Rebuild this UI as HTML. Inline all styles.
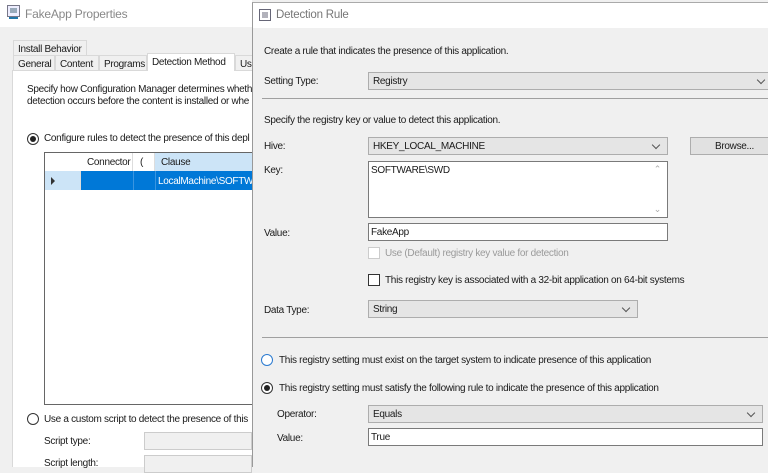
<!DOCTYPE html>
<html><head><meta charset="utf-8"><style>
*{box-sizing:border-box;margin:0;padding:0}
body{width:768px;height:467px;overflow:hidden;background:#f0f0f0;font-family:"Liberation Sans",sans-serif;font-size:10px;letter-spacing:-0.3px;color:#1a1a1a;position:relative}
.a{position:absolute;white-space:nowrap}
.combo{position:absolute;background:#e5e5e5;border:1px solid #adadad;padding:3px 0 0 4px}
.combo::after{content:"";position:absolute;right:8px;top:4px;width:5px;height:5px;border-right:1px solid #555;border-bottom:1px solid #555;transform:rotate(45deg)}
.inp{position:absolute;background:#fff;border:1px solid #7a7a7a;padding:3px 0 0 2px}
.rad{position:absolute;width:12px;height:12px;border:1px solid #333;border-radius:50%;background:#fff}
.rad.on::after{content:"";position:absolute;left:2px;top:2px;width:6px;height:6px;border-radius:50%;background:#222}
.chk{position:absolute;width:12px;height:12px;border:1px solid #333;background:#fff}
.tab{position:absolute;border:1px solid #d9d9d9;border-bottom:none;background:#f0f0f0;padding:3px 0 0 4px;height:16px}
</style></head><body>
<div class="a" style="left:0;top:0;width:252px;height:27px;background:#fff"></div>
<svg class="a" style="left:7px;top:5px" width="13" height="14"><rect x="0.5" y="0.5" width="12" height="11" fill="#eef" stroke="#778"/><rect x="3" y="3" width="7" height="5" fill="#9ab"/><rect x="2" y="12" width="9" height="2" fill="#27a"/></svg>
<div class="a" style="left:25px;top:7px;font-size:12px;color:#888;letter-spacing:-0.2px">FakeApp Properties</div>
<div class="tab" style="left:13px;top:40px;width:74px">Install Behavior</div>
<div class="tab" style="left:13px;top:55px;width:42px">General</div>
<div class="tab" style="left:55px;top:55px;width:44px">Content</div>
<div class="tab" style="left:99px;top:55px;width:48px">Programs</div>
<div class="tab" style="left:147px;top:53px;width:88px;height:18px;background:#fff;z-index:2">Detection Method</div>
<div class="tab" style="left:235px;top:55px;width:20px">Us</div>
<div class="a" style="left:12px;top:70px;width:240px;height:397px;background:#fff;border-left:1px solid #d9d9d9;border-top:1px solid #d9d9d9"></div>
<div class="a" style="left:27px;top:84px">Specify how Configuration Manager determines wheth</div>
<div class="a" style="left:27px;top:96px">detection occurs before the content is installed or whe</div>
<div class="rad on" style="left:27px;top:133px"></div>
<div class="a" style="left:44px;top:133px">Configure rules to detect the presence of this depl</div>
<div class="a" style="left:44px;top:152px;width:208px;height:253px;background:#fff;border:1px solid #666;border-right:none"></div>
<div class="a" style="left:80px;top:153px;width:172px;height:18px;background:#cce4f7"></div>
<div class="a" style="left:80px;top:153px;width:1px;height:37px;background:#ddd"></div>
<div class="a" style="left:80px;top:153px;width:53px;height:18px;background:#fff;border-right:1px solid #ddd"></div>
<div class="a" style="left:133px;top:153px;width:22px;height:18px;background:#fff;border-right:1px solid #ddd"></div>
<div class="a" style="left:87px;top:157px">Connector</div>
<div class="a" style="left:140px;top:157px">(</div>
<div class="a" style="left:161px;top:157px">Clause</div>
<div class="a" style="left:45px;top:171px;width:35px;height:19px;background:#cce4f7"></div>
<div class="a" style="left:51px;top:177px;width:0;height:0;border-left:4px solid #333;border-top:4px solid transparent;border-bottom:4px solid transparent"></div>
<div class="a" style="left:81px;top:171px;width:171px;height:19px;background:#0078d7"></div>
<div class="a" style="left:133px;top:171px;width:1px;height:19px;background:#3a95e0"></div>
<div class="a" style="left:155px;top:171px;width:1px;height:19px;background:#3a95e0"></div>
<div class="a" style="left:158px;top:176px;color:#fff">LocalMachine\SOFTW</div>
<div class="rad" style="left:27px;top:413px"></div>
<div class="a" style="left:44px;top:414px">Use a custom script to detect the presence of this</div>
<div class="a" style="left:44px;top:436px">Script type:</div>
<div class="a" style="left:144px;top:432px;width:108px;height:18px;background:#f0f0f0;border:1px solid #ccc"></div>
<div class="a" style="left:44px;top:458px">Script length:</div>
<div class="a" style="left:144px;top:455px;width:108px;height:18px;background:#f0f0f0;border:1px solid #ccc"></div>
<div class="a" style="left:252px;top:2px;width:516px;height:465px;background:#f0f0f0;border-left:1px solid #999;border-top:1px solid #aaa"></div>
<div class="a" style="left:253px;top:3px;width:515px;height:25px;background:#fff"></div>
<svg class="a" style="left:259px;top:9px" width="12" height="12"><rect x="0.5" y="0.5" width="11" height="11" fill="#fff" stroke="#667"/><path d="M3 4h6M3 6h6M3 8h6" stroke="#667"/></svg>
<div class="a" style="left:276px;top:9px;font-size:11.5px;color:#777;letter-spacing:-0.2px">Detection Rule</div>
<div class="a" style="left:264px;top:46px">Create a rule that indicates the presence of this application.</div>
<div class="a" style="left:264px;top:76px">Setting Type:</div>
<div class="combo" style="left:368px;top:72px;width:405px;height:18px">Registry</div>
<div class="a" style="left:262px;top:98px;width:506px;height:1px;background:#a0a0a0"></div>
<div class="a" style="left:264px;top:115px">Specify the registry key or value to detect this application.</div>
<div class="a" style="left:264px;top:141px">Hive:</div>
<div class="combo" style="left:368px;top:137px;width:300px;height:18px">HKEY_LOCAL_MACHINE</div>
<div class="a" style="left:690px;top:137px;width:80px;height:18px;background:#e1e1e1;border:1px solid #adadad;padding:3px 0 0 24px">Browse...</div>
<div class="a" style="left:264px;top:165px">Key:</div>
<div class="inp" style="left:368px;top:161px;width:300px;height:57px">SOFTWARE\SWD<span class="a" style="right:6px;top:2px;color:#aaa;font-size:9px">&#8963;</span><span class="a" style="right:6px;bottom:2px;color:#aaa;font-size:9px">&#8964;</span></div>
<div class="a" style="left:264px;top:228px">Value:</div>
<div class="inp" style="left:368px;top:223px;width:300px;height:18px">FakeApp</div>
<div class="chk" style="left:368px;top:247px;border-color:#ccc"></div>
<div class="a" style="left:385px;top:248px;color:#9a9a9a">Use (Default) registry key value for detection</div>
<div class="chk" style="left:368px;top:274px"></div>
<div class="a" style="left:385px;top:275px">This registry key is associated with a 32-bit application on 64-bit systems</div>
<div class="a" style="left:264px;top:305px">Data Type:</div>
<div class="combo" style="left:368px;top:300px;width:270px;height:18px">String</div>
<div class="a" style="left:262px;top:337px;width:506px;height:1px;background:#a0a0a0"></div>
<div class="rad" style="left:261px;top:354px;border-color:#2a7ad0"></div>
<div class="a" style="left:279px;top:355px">This registry setting must exist on the target system to indicate presence of this application</div>
<div class="rad on" style="left:261px;top:382px"></div>
<div class="a" style="left:279px;top:383px">This registry setting must satisfy the following rule to indicate the presence of this application</div>
<div class="a" style="left:277px;top:409px">Operator:</div>
<div class="combo" style="left:368px;top:405px;width:395px;height:18px">Equals</div>
<div class="a" style="left:277px;top:433px">Value:</div>
<div class="inp" style="left:368px;top:428px;width:395px;height:18px">True</div>
</body></html>
